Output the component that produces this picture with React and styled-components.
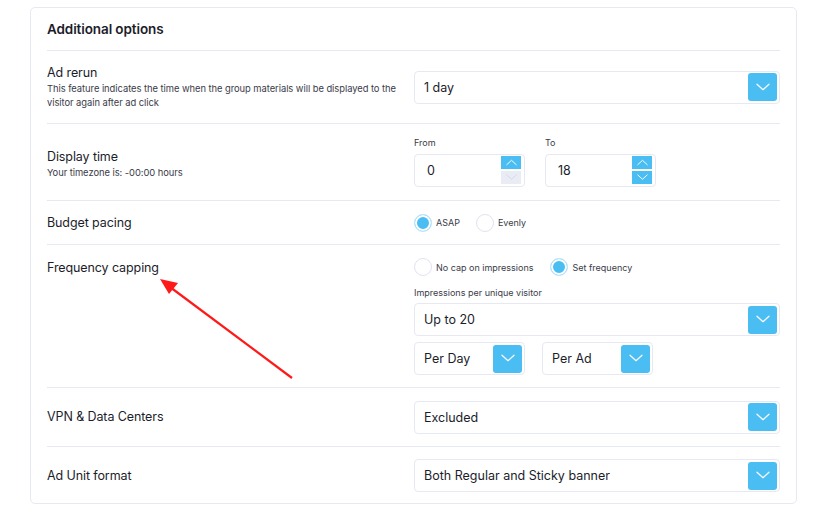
import React from 'react';
import styled, { createGlobalStyle, css } from 'styled-components';

const GlobalStyle = createGlobalStyle`
  html, body {
    margin: 0;
    padding: 0;
    background: #ffffff;
  }
  body {
    font-family: "Inter", "Liberation Sans", sans-serif;
    color: #1c1d2b;
  }
`;

const BLUE = '#4abef2';
const LINE = '#e6e9f2';

const Page = styled.div`
  position: relative;
  width: 828px;
  height: 522px;
  padding: 7px 31px 0 30px;
  box-sizing: border-box;
`;

const Card = styled.section`
  border: 1px solid ${LINE};
  border-radius: 5px;
  padding: 0 16px 11px 16px;
  background: #fff;
`;

const CardTitle = styled.h2`
  margin: 0;
  height: 42px;
  display: flex;
  align-items: center;
  font-size: 13.5px;
  font-weight: 600;
  letter-spacing: -0.1px;
  border-bottom: 1.5px solid ${LINE};
`;

const Row = styled.div`
  display: grid;
  grid-template-columns: 367px 1fr;
  align-items: ${p => p.align || 'center'};
  padding: ${p => p.pad || '0'};
  min-height: ${p => p.h}px;
  box-sizing: border-box;
  border-bottom: ${p => (p.last ? 'none' : `1.5px solid ${LINE}`)};
`;

const LabelCol = styled.div`
  display: flex;
  flex-direction: column;
  padding-top: ${p => p.top || 0}px;
`;

const Label = styled.div`
  font-size: 12.5px;
  line-height: 16px;
  letter-spacing: -0.1px;
`;

const Hint = styled.div`
  max-width: 362px;
  font-size: 9.4px;
  line-height: 14px;
  color: #3a3b48;
  margin-top: 1px;
  letter-spacing: -0.05px;
`;

const FieldCol = styled.div`
  display: flex;
  flex-direction: column;
`;

const Box = styled.div`
  display: flex;
  align-items: center;
  justify-content: space-between;
  width: ${p => (p.w ? `${p.w}px` : '100%')};
  height: 33px;
  box-sizing: border-box;
  border: 1px solid ${LINE};
  border-radius: 4px;
  padding: 0 2px 0 9px;
  background: #fff;
  font-size: ${p => p.fs || 12.5}px;
`;

const DropBtn = styled.span`
  display: flex;
  align-items: center;
  justify-content: center;
  width: 29px;
  height: 28px;
  border-radius: 3px;
  background: ${BLUE};
`;

const Chevron = ({ up, color = '#fff', size = 14 }) => (
  <svg width={size} height={size * 0.6} viewBox="0 0 14 8" fill="none">
    <path
      d={up ? 'M1 7 L7 1.5 L13 7' : 'M1 1 L7 6.5 L13 1'}
      stroke={color}
      strokeWidth="1.2"
      strokeLinecap="round"
      strokeLinejoin="round"
    />
  </svg>
);

const Select = ({ value, w, fs }) => (
  <Box w={w} fs={fs}>
    <span>{value}</span>
    <DropBtn>
      <Chevron />
    </DropBtn>
  </Box>
);

const TimeGroup = styled.div`
  display: flex;
  gap: 20px;
`;

const TimeField = styled.div`
  display: flex;
  flex-direction: column;
`;

const SmallLabel = styled.div`
  font-size: 9px;
  color: #3a3b48;
  line-height: 12px;
  margin-bottom: ${p => p.mb || 5}px;
`;

const Stepper = styled.div`
  display: flex;
  flex-direction: column;
  gap: 2px;
  margin-right: 1px;
`;

const StepBtn = styled.span`
  display: flex;
  align-items: center;
  justify-content: center;
  width: 20px;
  height: 13px;
  ${p =>
    p.disabled
      ? css`
          background: #e9ecf4;
        `
      : css`
          background: ${BLUE};
        `}
`;

const NumberInput = ({ value, downDisabled }) => (
  <Box w={111} fs={12.5} style={{ paddingLeft: 12 }}>
    <span>{value}</span>
    <Stepper>
      <StepBtn>
        <Chevron up size={11} />
      </StepBtn>
      <StepBtn disabled={downDisabled}>
        <Chevron size={11} color={downDisabled ? '#d3d8e5' : '#fff'} />
      </StepBtn>
    </Stepper>
  </Box>
);

const RadioGroup = styled.div`
  display: flex;
  align-items: center;
  gap: ${p => p.gap || 16}px;
`;

const RadioItem = styled.label`
  display: flex;
  align-items: center;
  gap: 4px;
  font-size: 9px;
  color: #3a3b48;
`;

const RadioDot = styled.span`
  width: 16px;
  height: 16px;
  border-radius: 50%;
  border: 1px solid ${p => (p.checked ? '#bfe6f9' : '#dfe3ee')};
  background: ${p => (p.checked ? BLUE : '#fff')};
  box-shadow: ${p => (p.checked ? 'inset 0 0 0 2px #fff' : 'none')};
`;

const Radio = ({ checked, children }) => (
  <RadioItem>
    <RadioDot checked={checked} />
    {children}
  </RadioItem>
);

const SplitRow = styled.div`
  display: flex;
  gap: 17px;
  margin-top: 6px;
`;

const Arrow = styled.svg`
  position: absolute;
  left: 150px;
  top: 270px;
  pointer-events: none;
`;

export default function App() {
  return (
    <Page>
      <GlobalStyle />
      <Card>
        <CardTitle>Additional options</CardTitle>

        <Row h={73}>
          <LabelCol>
            <Label>Ad rerun</Label>
            <Hint>
              This feature indicates the time when the group materials will be displayed to the
              visitor again after ad click
            </Hint>
          </LabelCol>
          <FieldCol>
            <Select value="1 day" />
          </FieldCol>
        </Row>

        <Row h={77} pad="12px 0 13px">
          <LabelCol top={5}>
            <Label>Display time</Label>
            <Hint>Your timezone is: -00:00 hours</Hint>
          </LabelCol>
          <TimeGroup>
            <TimeField>
              <SmallLabel>From</SmallLabel>
              <NumberInput value="0" downDisabled />
            </TimeField>
            <TimeField>
              <SmallLabel>To</SmallLabel>
              <NumberInput value="18" />
            </TimeField>
          </TimeGroup>
        </Row>

        <Row h={44}>
          <LabelCol>
            <Label>Budget pacing</Label>
          </LabelCol>
          <RadioGroup gap={16}>
            <Radio checked>ASAP</Radio>
            <Radio>Evenly</Radio>
          </RadioGroup>
        </Row>

        <Row h={142} align="start" pad="13px 0 12px">
          <LabelCol top={2}>
            <Label>Frequency capping</Label>
          </LabelCol>
          <FieldCol>
            <RadioGroup gap={17}>
              <Radio>No cap on impressions</Radio>
              <Radio checked>Set frequency</Radio>
            </RadioGroup>
            <SmallLabel mb={4} style={{ marginTop: 11 }}>
              Impressions per unique visitor
            </SmallLabel>
            <Select value="Up to 20" />
            <SplitRow>
              <Select value="Per Day" w={111} />
              <Select value="Per Ad" w={111} />
            </SplitRow>
          </FieldCol>
        </Row>

        <Row h={59}>
          <LabelCol>
            <Label>VPN &amp; Data Centers</Label>
          </LabelCol>
          <FieldCol>
            <Select value="Excluded" />
          </FieldCol>
        </Row>

        <Row h={45} last pad="12px 0 0">
          <LabelCol>
            <Label>Ad Unit format</Label>
          </LabelCol>
          <FieldCol>
            <Select value="Both Regular and Sticky banner" />
          </FieldCol>
        </Row>
      </Card>

      <Arrow width="150" height="115" viewBox="0 0 150 115">
        <line x1="142" y1="108" x2="20" y2="17" stroke="#ff1a1a" strokeWidth="2.2" />
        <polygon points="10,9 28,13 19,24" fill="#ff1a1a" />
      </Arrow>
    </Page>
  );
}
